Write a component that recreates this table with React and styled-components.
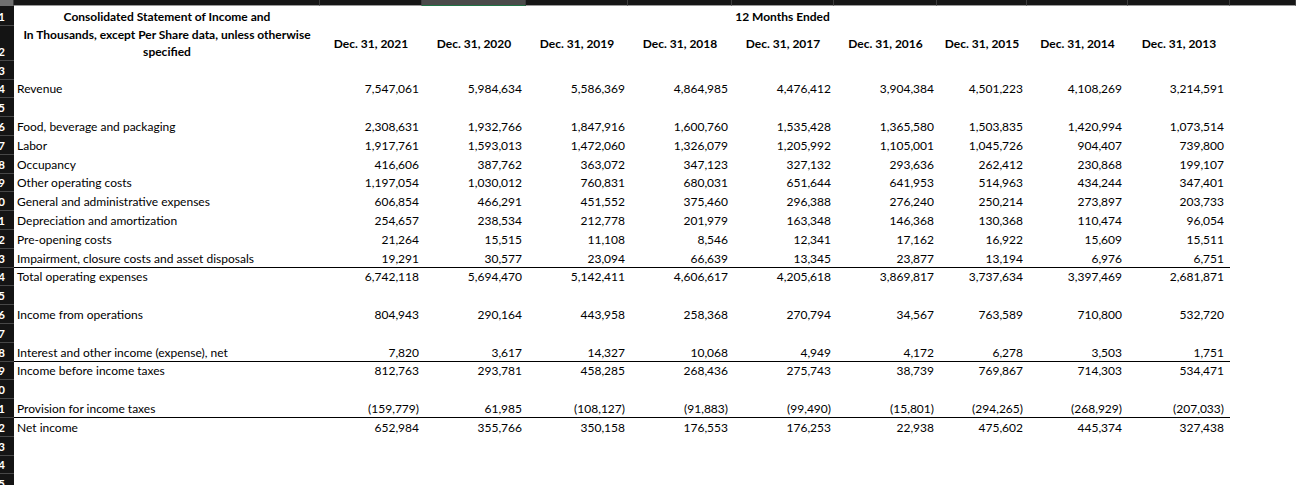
import styled, { createGlobalStyle, css } from 'styled-components'

const GlobalStyle = createGlobalStyle`
  html, body {
    margin: 0;
    padding: 0;
    background: #fff;
    overflow: hidden;
  }
  body {
    font-family: Lato, "Open Sans", sans-serif;
    color: #000;
  }
`

// column widths of the sheet: row header, A, B..J, and the cut-off K
const COLS = '14px 306px 102px 104px 102px 104px 102px 103px 90px 101px 102px 1fr'
const PADS = [3, 4, 3, 4, 3, 3, 4, 6, 6]

const Sheet = styled.div`
  width: 1296px;
  height: 485px;
  overflow: hidden;
  display: flex;
  flex-direction: column;
`

const ColumnBar = styled.div`
  display: grid;
  grid-template-columns: ${COLS};
  height: 6px;
  background: #161616;
  flex: none;
`

const BarCell = styled.div`
  box-sizing: border-box;
  border-right: 1px solid #3c3c3c;
  border-bottom: 1px solid ${p => (p.$selected ? '#217346' : '#9a9a9a')};
  background: ${p => (p.$selected ? '#4a4a4a' : 'transparent')};
  ${p => p.$corner && css`
    background: #6f6f6f;
    border-bottom-color: #6f6f6f;
  `}
`

const Row = styled.div`
  display: grid;
  grid-template-columns: ${COLS};
  height: ${p => p.$h}px;
  flex: none;
  ${p => p.$rule && css`
    & > *:not(:first-child):not(:last-child) {
      box-shadow: inset 0 -1px 0 #000;
    }
  `}
`

const RowHead = styled.div`
  background: #141414;
  border-bottom: 1px solid #474747;
  box-sizing: border-box;
  overflow: hidden;
  display: flex;
  align-items: flex-end;
  justify-content: flex-end;
  padding: 0 9px 1px 0;
  color: #fff;
  font-weight: 700;
  font-size: 11.5px;
  line-height: 14px;
  white-space: nowrap;
`

const Cell = styled.div`
  display: flex;
  align-items: flex-end;
  padding-bottom: 2px;
  box-sizing: border-box;
  font-size: 12px;
  line-height: 14px;
  white-space: nowrap;
  min-width: 0;
`

const Label = styled(Cell)`
  padding-left: 3px;
`

const Num = styled(Cell)`
  justify-content: flex-end;
  padding-right: ${p => p.$pad}px;
`

const Head = styled.div`
  display: flex;
  align-items: center;
  justify-content: center;
  text-align: center;
  font-weight: 700;
  font-size: 12px;
  line-height: 17px;
  white-space: nowrap;
  grid-column: ${p => p.$span || 'auto'};
`

const Blank = styled.div``

const DATES = [2021, 2020, 2019, 2018, 2017, 2016, 2015, 2014, 2013].map(y => `Dec. 31, ${y}`)

const LINES = [
  [4, 'Revenue', '7,547,061 5,984,634 5,586,369 4,864,985 4,476,412 3,904,384 4,501,223 4,108,269 3,214,591'],
  [5],
  [6, 'Food, beverage and packaging', '2,308,631 1,932,766 1,847,916 1,600,760 1,535,428 1,365,580 1,503,835 1,420,994 1,073,514'],
  [7, 'Labor', '1,917,761 1,593,013 1,472,060 1,326,079 1,205,992 1,105,001 1,045,726 904,407 739,800'],
  [8, 'Occupancy', '416,606 387,762 363,072 347,123 327,132 293,636 262,412 230,868 199,107'],
  [9, 'Other operating costs', '1,197,054 1,030,012 760,831 680,031 651,644 641,953 514,963 434,244 347,401'],
  [10, 'General and administrative expenses', '606,854 466,291 451,552 375,460 296,388 276,240 250,214 273,897 203,733'],
  [11, 'Depreciation and amortization', '254,657 238,534 212,778 201,979 163,348 146,368 130,368 110,474 96,054'],
  [12, 'Pre-opening costs', '21,264 15,515 11,108 8,546 12,341 17,162 16,922 15,609 15,511'],
  [13, 'Impairment, closure costs and asset disposals', '19,291 30,577 23,094 66,639 13,345 23,877 13,194 6,976 6,751', true],
  [14, 'Total operating expenses', '6,742,118 5,694,470 5,142,411 4,606,617 4,205,618 3,869,817 3,737,634 3,397,469 2,681,871'],
  [15],
  [16, 'Income from operations', '804,943 290,164 443,958 258,368 270,794 34,567 763,589 710,800 532,720'],
  [17],
  [18, 'Interest and other income (expense), net', '7,820 3,617 14,327 10,068 4,949 4,172 6,278 3,503 1,751', true],
  [19, 'Income before income taxes', '812,763 293,781 458,285 268,436 275,743 38,739 769,867 714,303 534,471'],
  [20],
  [21, 'Provision for income taxes', '(159,779) 61,985 (108,127) (91,883) (99,490) (15,801) (294,265) (268,929) (207,033)', true],
  [22, 'Net income', '652,984 355,766 350,158 176,553 176,253 22,938 475,602 445,374 327,438'],
  [23],
  [24],
  [25],
]

const ROW_H = 18.8

const DataRow = ({ n, label, values, rule }) => (
  <Row $h={ROW_H} $rule={rule}>
    <RowHead>{n}</RowHead>
    <Label>{label}</Label>
    {PADS.map((pad, i) => (
      <Num key={i} $pad={pad}>{values ? values.split(' ')[i] : ''}</Num>
    ))}
    <Blank />
  </Row>
)

export default function App() {
  return (
    <Sheet>
      <GlobalStyle />
      <ColumnBar>
        <BarCell $corner />
        {Array.from({ length: 11 }, (_, i) => (
          <BarCell key={i} $selected={i === 2} />
        ))}
      </ColumnBar>

      <Row $h={20}>
        <RowHead>1</RowHead>
        <Head>Consolidated Statement of Income and</Head>
        <Head $span="6 / 9">12 Months Ended</Head>
      </Row>

      <Row $h={34.8}>
        <RowHead>2</RowHead>
        <Head>
          <span>
            In Thousands, except Per Share data, unless otherwise
            <br />
            specified
          </span>
        </Head>
        {DATES.map(d => (
          <Head key={d}>{d}</Head>
        ))}
        <Blank />
      </Row>

      <DataRow n={3} />
      {LINES.map(([n, label, values, rule]) => (
        <DataRow key={n} n={n} label={label} values={values} rule={rule} />
      ))}
    </Sheet>
  )
}
